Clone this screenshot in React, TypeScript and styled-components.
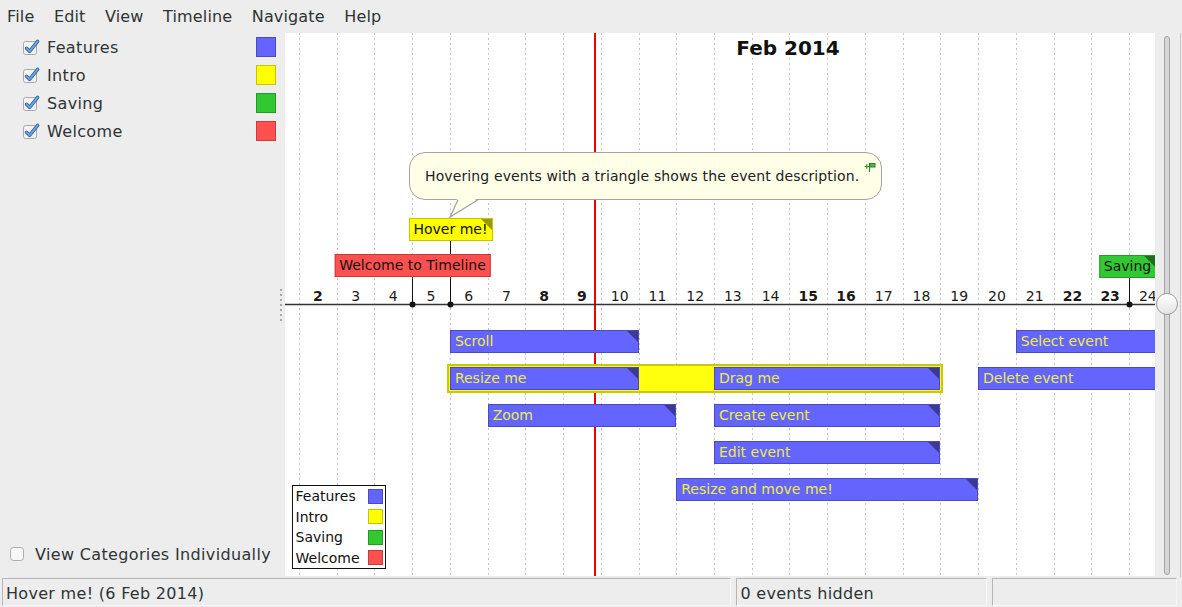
import React from 'react';
import styled, { createGlobalStyle, css } from 'styled-components';

const GlobalStyle = createGlobalStyle`
  html, body { margin: 0; padding: 0; background: #ededed; }
  body { font-family: "DejaVu Sans", "Liberation Sans", sans-serif; }
  #root { width: 1182px; height: 607px; overflow: hidden; }
`;

type Kind = 'feature' | 'intro' | 'saving' | 'welcome';

const palette: Record<Kind, { fill: string; border: string; corner: string; text: string }> = {
  feature: { fill: '#6464ff', border: '#4b4bbd', corner: '#3a3a92', text: '#eeee3c' },
  intro: { fill: '#ffff00', border: '#c4c400', corner: '#9a9a00', text: '#111111' },
  saving: { fill: '#32c832', border: '#249a24', corner: '#1c6e1c', text: '#111111' },
  welcome: { fill: '#ff5050', border: '#c43c3c', corner: '#8a2a2a', text: '#111111' },
};

const Window = styled.div`
  width: 1182px;
  height: 607px;
  display: flex;
  flex-direction: column;
  background: #ededed;
  color: #2e3436;
  font-family: "DejaVu Sans", "Liberation Sans", sans-serif;
`;

const MenuBar = styled.div`
  height: 33px;
  flex: none;
  display: flex;
  align-items: center;
  gap: 19.5px;
  padding: 0 0 1px 7px;
  box-sizing: border-box;
  font-size: 16px;
  letter-spacing: 0.15px;
`;

const MenuItem = styled.span`
  color: #2e3436;
`;

const Main = styled.div`
  height: 544px;
  flex: none;
  display: flex;
`;

const LeftPane = styled.div`
  width: 279px;
  flex: none;
  display: flex;
  flex-direction: column;
  letter-spacing: 0.35px;
`;

const CategoryRow = styled.div`
  height: 28px;
  display: flex;
  align-items: center;
  padding: 0 3px 0 22px;
  font-size: 16px;
`;

const CategoryLabel = styled.span`
  margin-left: 7px;
`;

const Swatch = styled.span<{ $kind: Kind; $size: number }>`
  margin-left: auto;
  width: ${(p) => p.$size}px;
  height: ${(p) => p.$size}px;
  box-sizing: border-box;
  background: ${(p) => palette[p.$kind].fill};
  border: 1px solid ${(p) => palette[p.$kind].border};
`;

const Spacer = styled.div`
  flex: 1;
`;

const BottomRow = styled.div`
  height: 28px;
  margin-bottom: 9px;
  display: flex;
  align-items: center;
  padding-left: 9px;
  font-size: 16px;
  gap: 10px;
`;

const Splitter = styled.div`
  width: 6px;
  flex: none;
  display: flex;
  flex-direction: column;
  align-items: center;
  justify-content: center;
  gap: 3px;
  padding-right: 2px;
  box-sizing: border-box;
`;

const GripDot = styled.span`
  width: 2px;
  height: 2px;
  background: #a8a8a8;
`;

const Canvas = styled.div`
  width: 870px;
  height: 543px;
  flex: none;
  background: #ffffff;
  position: relative;
  overflow: hidden;
`;

const ChartSvg = styled.svg`
  position: absolute;
  left: 0;
  top: 0;
  font-family: "DejaVu Sans", sans-serif;
`;

const NowLine = styled.div`
  position: absolute;
  left: 309px;
  top: 0;
  width: 2px;
  height: 100%;
  background: #ee0000;
`;

const MonthLabel = styled.div`
  position: absolute;
  left: 503px;
  top: 3px;
  transform: translateX(-50%);
  font-size: 20px;
  font-weight: bold;
  color: #111;
  white-space: nowrap;
`;

const EventBox = styled.div<{ $kind: Kind; $corner?: boolean; $centered?: boolean }>`
  position: absolute;
  height: 23px;
  box-sizing: border-box;
  background: ${(p) => palette[p.$kind].fill};
  border: 1px solid ${(p) => palette[p.$kind].border};
  color: ${(p) => palette[p.$kind].text};
  font-size: 14px;
  line-height: 21px;
  padding: 0 4px;
  white-space: nowrap;
  overflow: hidden;
  ${(p) =>
    p.$centered &&
    css`
      transform: translateX(-50%);
    `}
  ${(p) =>
    p.$corner &&
    css`
      &::after {
        content: '';
        position: absolute;
        top: 0;
        right: 0;
        width: 0;
        height: 0;
        border-left: 11px solid transparent;
        border-top: 11px solid ${palette[p.$kind].corner};
      }
    `}
`;

const GroupBox = styled.div`
  position: absolute;
  box-sizing: border-box;
  height: 29px;
  background: #ffff0e;
  border: 2px solid #c8c810;
`;

const Bubble = styled.div`
  position: absolute;
  left: 124px;
  top: 119px;
  width: 473px;
  height: 48px;
  box-sizing: border-box;
  border: 1.5px solid #a4a4a4;
  border-radius: 16px;
  background: #ffffe8;
  display: flex;
  align-items: center;
  padding-left: 15px;
  font-size: 14px;
  letter-spacing: 0.12px;
  color: #222;
  white-space: nowrap;
`;

const BubbleIcon = styled.svg`
  position: absolute;
  right: 5px;
  top: 9px;
`;

const BubbleTail = styled.svg`
  position: absolute;
  left: 160px;
  top: 160px;
`;

const Legend = styled.div`
  position: absolute;
  left: 7px;
  bottom: 7px;
  width: 94px;
  box-sizing: border-box;
  background: #fff;
  border: 1.5px solid #111;
  padding: 0 2px 0 2.5px;
  display: grid;
  grid-template-columns: 1fr 15px;
  grid-auto-rows: 20.5px;
  align-items: center;
  font-size: 14px;
  color: #111;
`;

const LegendSwatch = styled.span<{ $kind: Kind }>`
  width: 15px;
  height: 15px;
  box-sizing: border-box;
  background: ${(p) => palette[p.$kind].fill};
  border: 1px solid ${(p) => palette[p.$kind].border};
`;

const ScrollColumn = styled.div`
  width: 25px;
  flex: none;
  position: relative;
  border-right: 1px solid #c8c8c8;
  margin-right: 1px;
`;

const Trough = styled.div`
  position: absolute;
  left: 9px;
  top: 3px;
  width: 6px;
  height: 539px;
  box-sizing: border-box;
  border: 1px solid #a4a4a4;
  border-radius: 3px;
  background: #d6d6d6;
`;

const Knob = styled.div`
  position: absolute;
  left: 1px;
  top: 260px;
  width: 22px;
  height: 22px;
  box-sizing: border-box;
  border-radius: 50%;
  border: 1px solid #9c9c9c;
  background: linear-gradient(#ffffff, #e4e4e4);
`;

const StatusBar = styled.div`
  height: 30px;
  flex: none;
  display: flex;
  align-items: center;
  padding: 0 5px 0 2px;
  gap: 4px;
`;

const StatusCell = styled.div<{ $w: number }>`
  width: ${(p) => p.$w}px;
  height: 28px;
  box-sizing: border-box;
  border-top: 1px solid #b6b6b6;
  border-left: 1px solid #b6b6b6;
  border-bottom: 1px solid #f6f6f6;
  border-right: 1px solid #f6f6f6;
  font-size: 16px;
  line-height: 24px;
  padding: 3px 0 0 3px;
  letter-spacing: 0.3px;
  color: #2e3436;
  white-space: nowrap;
  & + & {
    margin-left: 1px;
  }
`;

const CheckedBox = () => (
  <svg width="18" height="18" viewBox="0 0 18 18">
    <rect x="1.5" y="3.5" width="13" height="13" rx="2" fill="#f3f3f3" stroke="#a9a9a9" />
    <path d="M4.5 10.2 L7.6 13.4 L15.6 3.4" fill="none" stroke="#2d5f9e" strokeWidth="3.4" strokeLinecap="round" strokeLinejoin="round" />
    <path d="M4.5 10.2 L7.6 13.4 L15.6 3.4" fill="none" stroke="#6fa3e0" strokeWidth="1.8" strokeLinecap="round" strokeLinejoin="round" />
  </svg>
);

const EmptyBox = () => (
  <svg width="16" height="16" viewBox="0 0 16 16">
    <rect x="1.5" y="1.5" width="13" height="13" rx="3" fill="#f7f7f7" stroke="#ababab" />
  </svg>
);

const dayW = 37.727;
const dx = (n: number) => 14 + (n - 2) * dayW;
const weekend = new Set([2, 8, 9, 15, 16, 22, 23]);
const days = Array.from({ length: 23 }, (_, i) => i + 2);

const features = [
  { label: 'Scroll', start: 6, end: 11, row: 0 },
  { label: 'Select event', start: 21, end: 26, row: 0 },
  { label: 'Resize me', start: 6, end: 11, row: 1 },
  { label: 'Drag me', start: 13, end: 19, row: 1 },
  { label: 'Delete event', start: 20, end: 26, row: 1 },
  { label: 'Zoom', start: 7, end: 12, row: 2 },
  { label: 'Create event', start: 13, end: 19, row: 2 },
  { label: 'Edit event', start: 13, end: 19, row: 3 },
  { label: 'Resize and move me!', start: 12, end: 20, row: 4 },
];

const categories: { name: string; kind: Kind }[] = [
  { name: 'Features', kind: 'feature' },
  { name: 'Intro', kind: 'intro' },
  { name: 'Saving', kind: 'saving' },
  { name: 'Welcome', kind: 'welcome' },
];

const AXIS = 271.5;

export default function App() {
  return (
    <>
      <GlobalStyle />
      <Window>
        <MenuBar>
          {['File', 'Edit', 'View', 'Timeline', 'Navigate', 'Help'].map((m) => (
            <MenuItem key={m}>{m}</MenuItem>
          ))}
        </MenuBar>
        <Main>
          <LeftPane>
            {categories.map((c) => (
              <CategoryRow key={c.name}>
                <CheckedBox />
                <CategoryLabel>{c.name}</CategoryLabel>
                <Swatch $kind={c.kind} $size={20} />
              </CategoryRow>
            ))}
            <Spacer />
            <BottomRow>
              <EmptyBox />
              <span>View Categories Individually</span>
            </BottomRow>
          </LeftPane>
          <Splitter>
            {Array.from({ length: 7 }, (_, i) => (
              <GripDot key={i} />
            ))}
          </Splitter>
          <Canvas>
            <ChartSvg width={870} height={543}>
              {days.map((n) => (
                <line
                  key={n}
                  x1={Math.round(dx(n)) + 0.5}
                  x2={Math.round(dx(n)) + 0.5}
                  y1={0}
                  y2={543}
                  stroke="#c6c6c6"
                  strokeDasharray="2 3"
                />
              ))}
            </ChartSvg>
            <NowLine />
            <ChartSvg width={870} height={543}>
              <line x1={0} x2={870} y1={AXIS} y2={AXIS} stroke="#333" strokeWidth={1.4} />
              <line x1={165.5} x2={165.5} y1={208} y2={AXIS} stroke="#111" />
              <line x1={127.5} x2={127.5} y1={244} y2={AXIS} stroke="#111" />
              <line x1={844.5} x2={844.5} y1={244} y2={AXIS} stroke="#111" />
              <circle cx={127.5} cy={AXIS} r={3} fill="#111" />
              <circle cx={165.5} cy={AXIS} r={3} fill="#111" />
              <circle cx={844.5} cy={AXIS} r={3} fill="#111" />
              {days.map((n) => (
                <text
                  key={`t${n}`}
                  x={dx(n) + dayW / 2}
                  y={268}
                  textAnchor="middle"
                  fontSize={14}
                  fontWeight={weekend.has(n) ? 'bold' : 'normal'}
                  fill="#1a1a1a"
                >
                  {n}
                </text>
              ))}
            </ChartSvg>

            <MonthLabel>Feb 2014</MonthLabel>

            <GroupBox style={{ left: dx(6) - 3, top: 331, width: dx(19) - dx(6) + 6 }} />
            {features.map((f) => (
              <EventBox
                key={f.label}
                $kind="feature"
                $corner
                style={{ left: dx(f.start), top: 297 + f.row * 37, width: dx(f.end) - dx(f.start) }}
              >
                {f.label}
              </EventBox>
            ))}

            <EventBox $kind="welcome" $centered style={{ left: 127.5, top: 221 }}>
              Welcome to Timeline
            </EventBox>
            <EventBox $kind="intro" $corner $centered style={{ left: 165.5, top: 185 }}>
              Hover me!
            </EventBox>
            <EventBox $kind="saving" $corner $centered style={{ left: 842.5, top: 222 }}>
              Saving
            </EventBox>

            <Bubble>
              Hovering events with a triangle shows the event description.
              <BubbleIcon width="12" height="11" viewBox="0 0 12 11">
                <path d="M0.5 4.5 H5 M2.75 2.2 V6.8" stroke="#2f8a2f" strokeWidth="1.2" fill="none" />
                <path d="M5.5 1 V10" stroke="#2f8a2f" strokeWidth="1.2" />
                <rect x="6" y="1.5" width="5" height="3.5" fill="#5cb85c" stroke="#2f7a2f" strokeWidth="1" />
              </BubbleIcon>
            </Bubble>
            <BubbleTail width="40" height="30" viewBox="0 0 40 30">
              <polygon points="12.5,4.5 33.5,4.5 5,24" fill="#ffffe8" />
              <polyline points="13,6.8 5,24 33,6.8" fill="none" stroke="#a4a4a4" strokeWidth="1.3" />
            </BubbleTail>

            <Legend>
              {categories.map((c) => (
                <React.Fragment key={c.name}>
                  <span>{c.name}</span>
                  <LegendSwatch $kind={c.kind} />
                </React.Fragment>
              ))}
            </Legend>
          </Canvas>
          <ScrollColumn>
            <Trough />
            <Knob />
          </ScrollColumn>
        </Main>
        <StatusBar>
          <StatusCell $w={730}>Hover me! (6 Feb 2014)</StatusCell>
          <StatusCell $w={251}>0 events hidden</StatusCell>
          <StatusCell $w={185} />
        </StatusBar>
      </Window>
    </>
  );
}
